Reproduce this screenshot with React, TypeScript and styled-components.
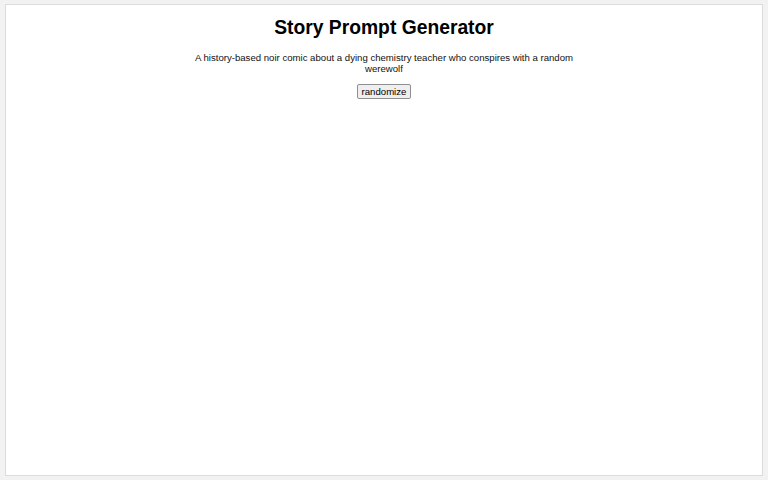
import React, { useState } from "react";
import styled, { createGlobalStyle } from "styled-components";

const GlobalStyle = createGlobalStyle`
  html, body {
    margin: 0;
    padding: 0;
    background: #f2f2f2;
    font-family: "Liberation Sans", Arial, sans-serif;
  }
  #root {
    padding: 4px;
    box-sizing: border-box;
    height: 480px;
  }
`;

const Card = styled.main`
  box-sizing: border-box;
  height: 472px;
  margin: 0 1px;
  background: #ffffff;
  border: 1px solid #dcdcdc;
  display: flex;
  flex-direction: column;
  align-items: center;
  padding-top: 11px;
`;

const Title = styled.h1`
  margin: 0;
  font-size: 19.3px;
  line-height: 24px;
  font-weight: bold;
  color: #000;
`;

const Prompt = styled.p`
  margin: 12px 0 0;
  width: 390px;
  font-size: 9.6px;
  line-height: 11px;
  text-align: center;
  color: #111;
`;

const Button = styled.button`
  margin-top: 10px;
  font-family: "Liberation Sans", Arial, sans-serif;
  font-size: 9.6px;
  line-height: 11px;
  padding: 1px 4px;
  color: #000;
  background: #efefef;
  border: 1px solid #8f8f8f;
  border-radius: 2px;
  cursor: pointer;
`;

const genres = ["history-based noir comic", "sci-fi romance", "gothic western"];
const heroes = ["a dying chemistry teacher", "a retired astronaut", "a lonely lighthouse keeper"];
const partners = ["a random werewolf", "a talking cat", "a rogue AI"];

const pick = (list: string[]) => list[Math.floor(Math.random() * list.length)];

export default function App() {
  const [prompt, setPrompt] = useState(
    "A history-based noir comic about a dying chemistry teacher who conspires with a random werewolf"
  );

  const randomize = () => {
    setPrompt(`A ${pick(genres)} about ${pick(heroes)} who conspires with ${pick(partners)}`);
  };

  return (
    <>
      <GlobalStyle />
      <Card>
        <Title>Story Prompt Generator</Title>
        <Prompt>{prompt}</Prompt>
        <Button onClick={randomize}>randomize</Button>
      </Card>
    </>
  );
}
